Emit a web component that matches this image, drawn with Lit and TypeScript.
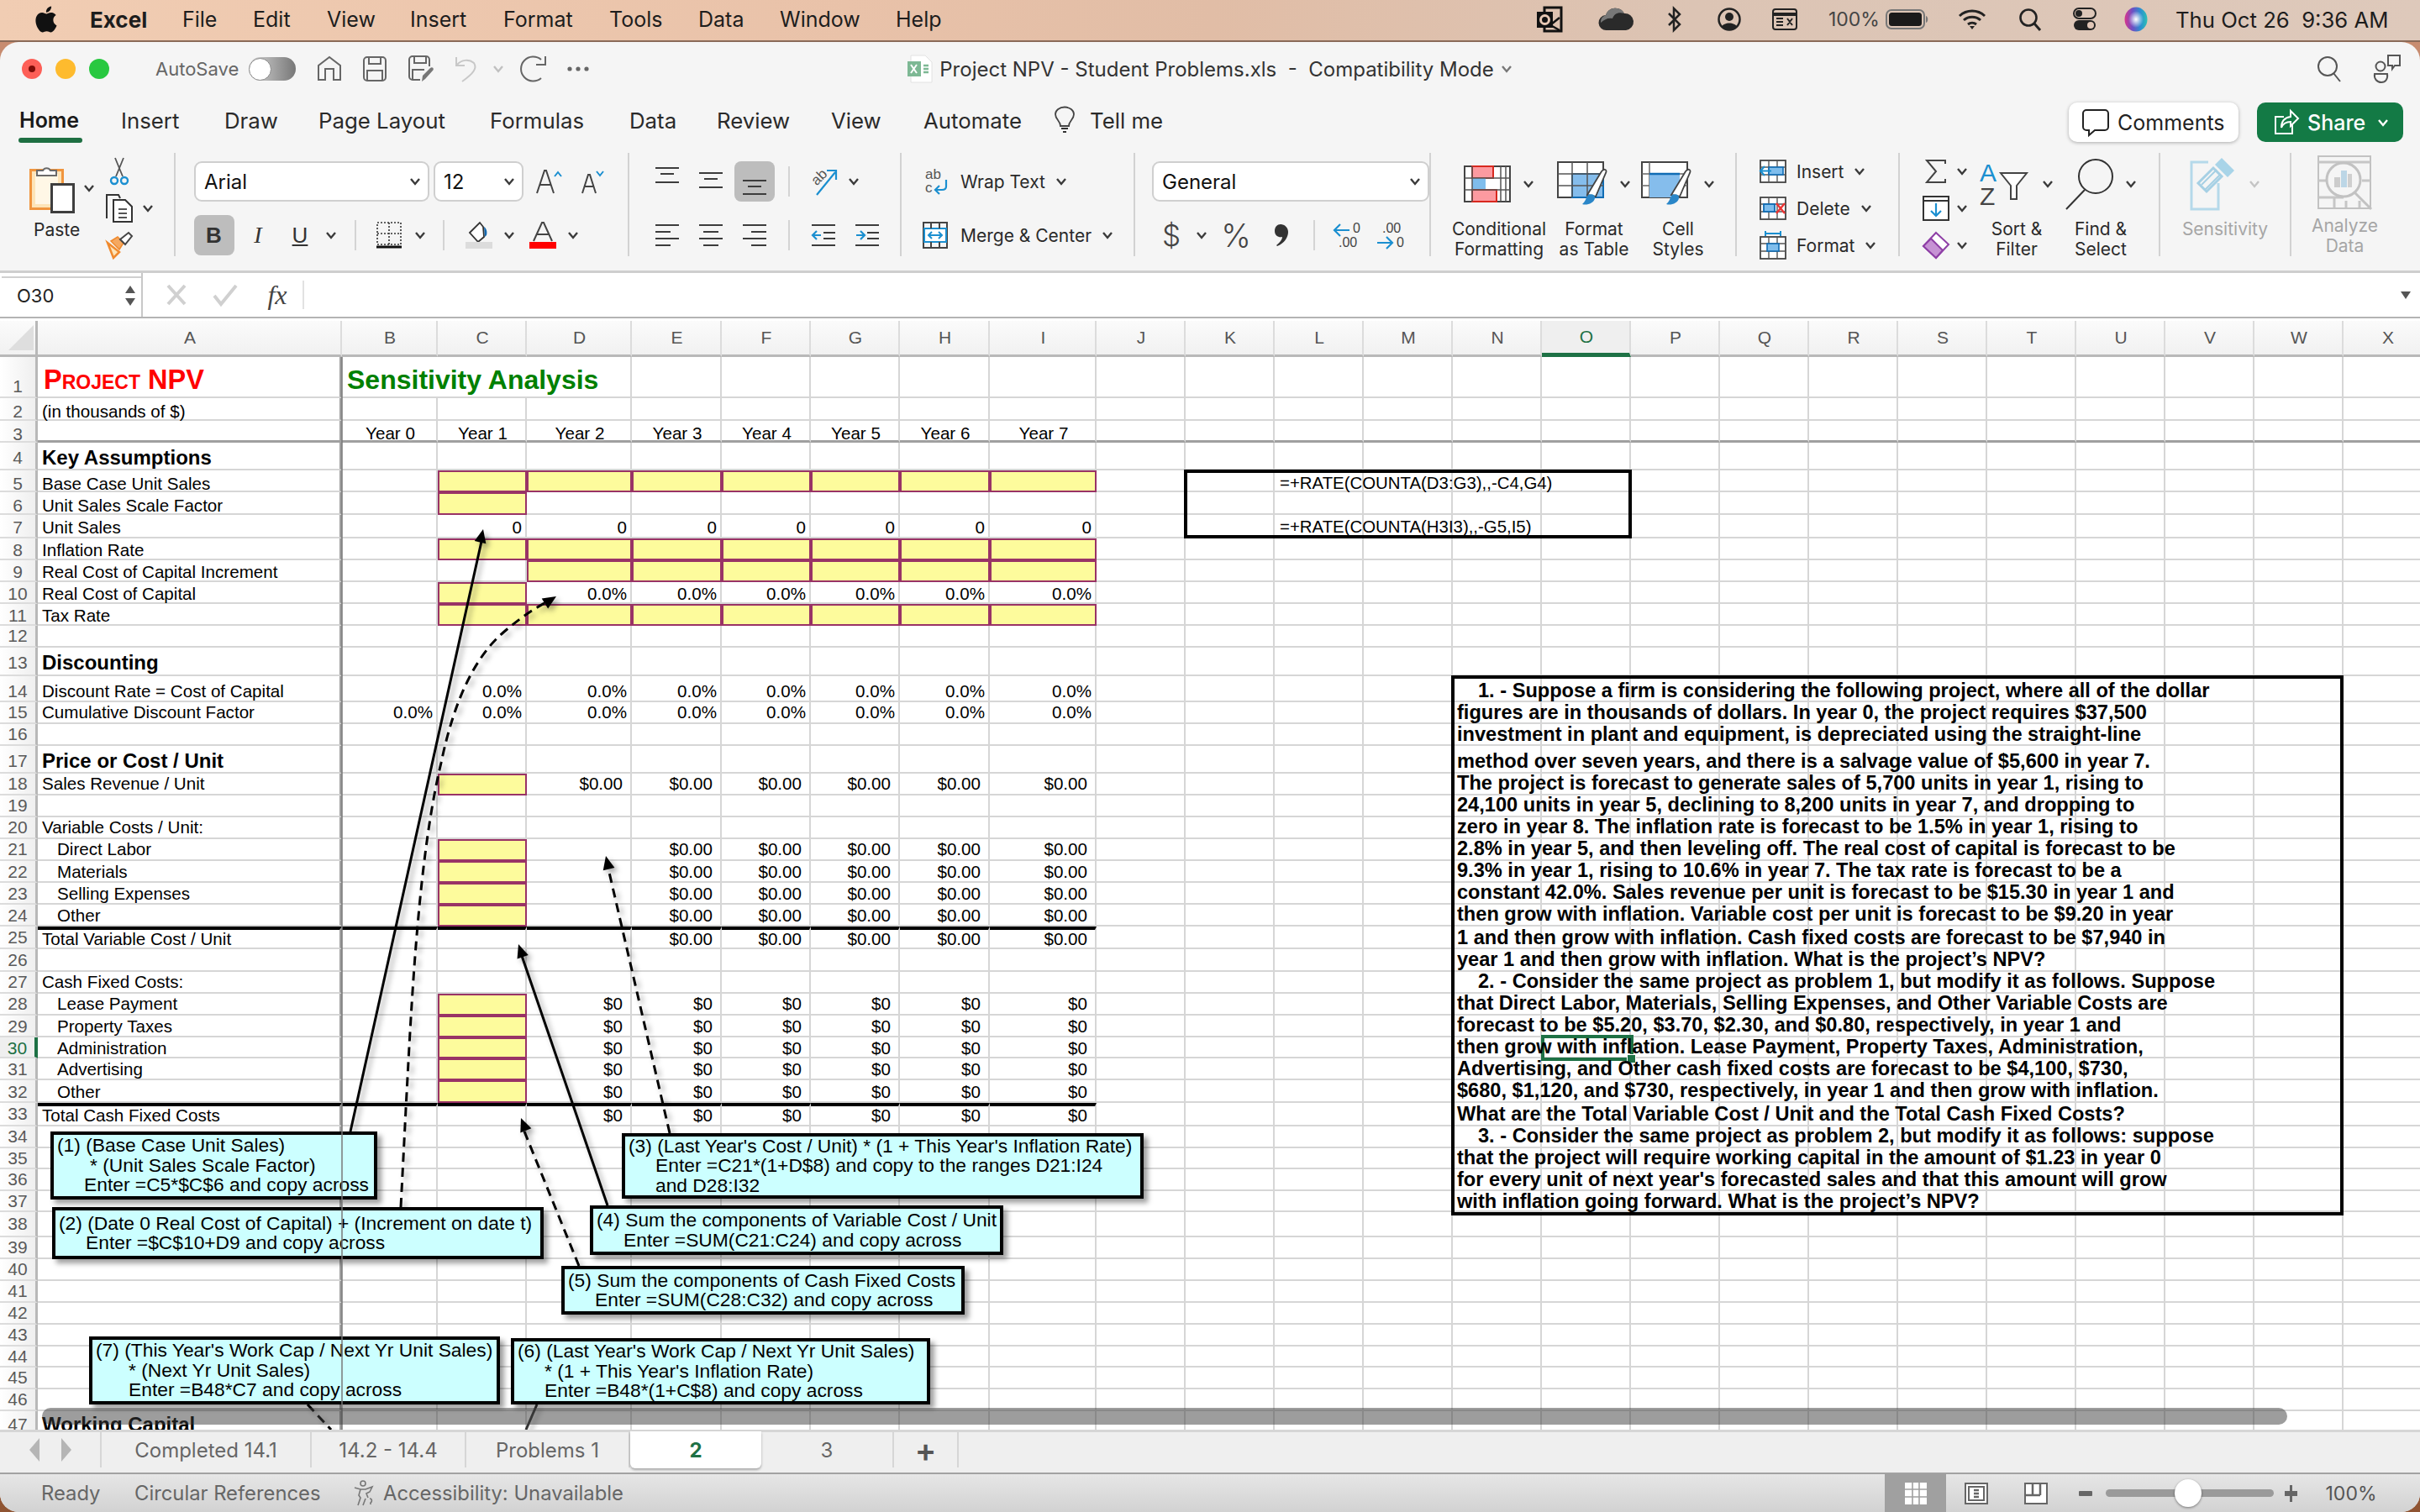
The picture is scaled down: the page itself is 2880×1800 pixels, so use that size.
import { LitElement, html, css } from "lit";
import { customElement } from "lit/decorators.js";

const BLUE = "#1b8fd0";
const chev = (c = "#3a3a3a") => html`<svg class="chev" width="14" height="10" viewBox="0 0 14 10"><path d="M2 2l5 6 5-6" fill="none" stroke=${c} stroke-width="2.4"/></svg>`;

const I = {
  apple: html`<svg width="30" height="34" viewBox="3 1 18 22"><path fill="#111" d="M18.71 19.5c-.83 1.24-1.71 2.45-3.05 2.47-1.34.03-1.77-.79-3.29-.79-1.53 0-2 .77-3.27.82-1.31.05-2.3-1.32-3.14-2.53C4.25 17 2.94 12.45 4.7 9.39c.87-1.52 2.43-2.48 4.12-2.51 1.28-.02 2.5.87 3.29.87.78 0 2.26-1.07 3.81-.91.65.03 2.47.26 3.64 1.98-.09.06-2.17 1.28-2.15 3.81.03 3.02 2.65 4.03 2.68 4.04-.03.07-.42 1.44-1.38 2.83M13 3.5c.73-.83 1.94-1.46 2.94-1.5.13 1.17-.34 2.35-1.04 3.19-.69.85-1.83 1.51-2.95 1.42-.15-1.15.41-2.35 1.05-3.11z"/></svg>`,
  outlook: html`<svg width="32" height="32" viewBox="0 0 32 32"><path d="M10 2h20v28H10z" fill="none" stroke="#111" stroke-width="3"/><path d="M12 20l16 9M28 14l-10 8" stroke="#111" stroke-width="2.5" fill="none"/><rect x="1" y="7" width="19" height="19" fill="#111"/><circle cx="10.5" cy="16.5" r="5" fill="none" stroke="#e8c8b4" stroke-width="3"/></svg>`,
  cloud: html`<svg width="42" height="28" viewBox="0 0 42 28"><path d="M10 27a9 9 0 0 1-1-18 12 12 0 0 1 22-2 10 10 0 0 1 2 20z" fill="#2a2a2a"/><path d="M3 18a9 9 0 0 1 6-9 12 12 0 0 1 22-2c-8-2-12 1-14 6-6-1-9 1-14 5z" fill="#777"/></svg>`,
  bt: html`<svg width="18" height="32" viewBox="0 0 18 32"><path d="M2 9l13 13-7 7V3l7 7L2 23" fill="none" stroke="#222" stroke-width="2.5"/></svg>`,
  user: html`<svg width="28" height="28" viewBox="0 0 28 28"><circle cx="14" cy="14" r="12.5" fill="none" stroke="#222" stroke-width="2.5"/><circle cx="14" cy="11" r="5" fill="#222"/><path d="M5 23c2-6 16-6 18 0l-4 3H9z" fill="#222"/></svg>`,
  cmd: html`<svg width="30" height="26" viewBox="0 0 30 26"><rect x="1" y="1" width="28" height="24" rx="3" fill="none" stroke="#222" stroke-width="2"/><path d="M1 7h28" stroke="#222" stroke-width="4"/><path d="M5 12h8M5 16h8M5 20h8M18 12l6 8M24 12l-6 8" stroke="#222" stroke-width="2"/></svg>`,
  battery: html`<svg width="52" height="24" viewBox="0 0 52 24"><rect x="1" y="1" width="45" height="22" rx="6" fill="none" stroke="#777" stroke-width="2"/><rect x="4" y="4" width="39" height="16" rx="3.5" fill="#1a1a1a"/><path d="M48 8c3 1 3 7 0 8z" fill="#777"/></svg>`,
  wifi: html`<svg width="34" height="26" viewBox="0 0 34 26"><path d="M2 9a22 22 0 0 1 30 0M7 14a15 15 0 0 1 20 0M12 19a8 8 0 0 1 10 0" fill="none" stroke="#222" stroke-width="3"/><path d="M14 21h6l-3 4z" fill="#222"/></svg>`,
  msearch: html`<svg width="28" height="28" viewBox="0 0 28 28"><circle cx="12" cy="12" r="9.5" fill="none" stroke="#222" stroke-width="2.6"/><path d="M19 19l7 8" stroke="#222" stroke-width="3"/></svg>`,
  ctrl: html`<svg width="30" height="28" viewBox="0 0 30 28"><rect x="2" y="1" width="26" height="12" rx="6" fill="none" stroke="#222" stroke-width="2"/><circle cx="8" cy="7" r="4" fill="#222"/><rect x="2" y="15" width="26" height="12" rx="6" fill="#222"/><circle cx="22" cy="21" r="4" fill="#e0c6b6"/></svg>`,
  siri: html`<svg width="28" height="30" viewBox="0 0 28 30"><defs><linearGradient id="sg" x1="0" x2="1"><stop offset="0" stop-color="#d8348c"/><stop offset=".35" stop-color="#6d4fc4"/><stop offset=".7" stop-color="#2a8fd0"/><stop offset="1" stop-color="#2cc0b4"/></linearGradient><radialGradient id="sc"><stop offset="0" stop-color="#fff"/><stop offset="1" stop-color="#fff" stop-opacity="0"/></radialGradient></defs><ellipse cx="14" cy="15" rx="13.5" ry="14.5" fill="url(#sg)"/><ellipse cx="14" cy="15" rx="9" ry="10" fill="url(#sc)"/></svg>`,
  home: html`<svg width="28" height="30" viewBox="0 0 28 30"><path d="M1 28V11L14 1l13 10v17h-8V15H9v13z" fill="none" stroke="#666" stroke-width="2"/></svg>`,
  save: html`<svg width="28" height="30" viewBox="0 0 28 30"><rect x="1" y="1" width="26" height="28" rx="4" fill="none" stroke="#666" stroke-width="2"/><path d="M7 1v8h14V1M5 29V17h18v12" fill="none" stroke="#666" stroke-width="2"/></svg>`,
  saveas: html`<svg width="30" height="32" viewBox="0 0 30 32"><path d="M14 29H5a4 4 0 0 1-4-4V5a4 4 0 0 1 4-4h16a4 4 0 0 1 4 4v8" fill="none" stroke="#666" stroke-width="2"/><path d="M7 1v8h14V1M5 28V17h14" fill="none" stroke="#666" stroke-width="2"/><path d="M16 31l1-7 9-9c3-2 5 1 3 3l-9 10z" fill="#777"/></svg>`,
  undo: html`<svg width="27" height="32" viewBox="0 0 27 32"><path d="M2 2v10h10M3 11c5-6 14-7 20-2 4 6 0 12-14 22" fill="none" stroke="#c8c8c8" stroke-width="2"/></svg>`,
  redo: html`<svg width="32" height="32" viewBox="0 0 32 32"><path d="M31 1v10H20M26 5A14.5 14.5 0 1 0 26 27" fill="none" stroke="#666" stroke-width="2"/></svg>`,
  dots: html`<svg width="26" height="6" viewBox="0 0 26 6"><circle cx="3" cy="3" r="2.6" fill="#666"/><circle cx="13" cy="3" r="2.6" fill="#666"/><circle cx="23" cy="3" r="2.6" fill="#666"/></svg>`,
  xls: html`<svg width="30" height="32" viewBox="0 0 30 32"><path d="M4 0h17l8 8v24H4z" fill="#fff" stroke="#e2e2e2"/><rect x="0" y="7" width="16" height="18" fill="#7db894"/><path d="M4 11l7 10M11 11l-7 10" stroke="#fff" stroke-width="2"/><path d="M19 12h6M19 16h6M19 20h6" stroke="#7db894" stroke-width="2.4"/></svg>`,
  search: html`<svg width="28" height="30" viewBox="0 0 28 30"><circle cx="12" cy="12" r="11" fill="none" stroke="#555" stroke-width="2"/><path d="M19 20l8 10" stroke="#555" stroke-width="2"/></svg>`,
  people: html`<svg width="34" height="34" viewBox="0 0 34 34"><circle cx="9" cy="14" r="5.5" fill="none" stroke="#555" stroke-width="2"/><path d="M2 23h15c1 6-2 10-7 10S1 29 2 23z" fill="none" stroke="#555" stroke-width="2"/><path d="M18 1h14v12h-6l-3 4v-4h-5z" fill="none" stroke="#555" stroke-width="2"/></svg>`,
  bulb: html`<svg width="24" height="32" viewBox="0 0 24 32"><path d="M7 23c0-6-6-8-6-14a11 8.500 0 0 1 22 0c0 6-6 8-6 14z" fill="none" stroke="#444" stroke-width="1.800"/><path d="M8 26h8M10 30h4" stroke="#333" stroke-width="2.200"/></svg>`,
  comment: html`<svg width="32" height="32" viewBox="0 0 32 32"><path d="M5 1h22a4 4 0 0 1 4 4v16a4 4 0 0 1-4 4H15l-7 6v-6H5a4 4 0 0 1-4-4V5a4 4 0 0 1 4-4z" fill="none" stroke="#222" stroke-width="2"/></svg>`,
  share: html`<svg width="30" height="30" viewBox="0 0 30 30"><path d="M22 17v11H2V8h10" fill="none" stroke="#fff" stroke-width="2"/><path d="M20 1l9 9-9 9v-5c-6 0-9 2-11 7 0-8 4-12 11-13z" fill="none" stroke="#fff" stroke-width="2"/></svg>`,
  paste: html`<svg width="56" height="62" viewBox="0 0 56 62"><rect x="1.500" y="9.500" width="38" height="46" fill="#fde4b8" stroke="#f0953e" stroke-width="3"/><rect x="7" y="14" width="27" height="36" fill="#fff7e6"/><path d="M9 16v-6h7a5 5 0 0 1 9 0h7v6z" fill="#fff" stroke="#6a6a6a" stroke-width="2"/><rect x="26.500" y="26.500" width="26" height="33" fill="#fff" stroke="#3e3e3e" stroke-width="3"/></svg>`,
  scissors: html`<svg width="22" height="34" viewBox="0 0 22 34"><path d="M6 1l9 22M16 1L7 23" stroke="#555" stroke-width="1.800" fill="none"/><circle cx="5" cy="28" r="4" fill="none" stroke="${BLUE}" stroke-width="2.400"/><circle cx="17" cy="28" r="4" fill="none" stroke="${BLUE}" stroke-width="2.400"/></svg>`,
  copy: html`<svg width="32" height="34" viewBox="0 0 32 34"><path d="M1 29V1h14l2 4" fill="none" stroke="#333" stroke-width="2"/><path d="M9 7h14l8 8v18H9z" fill="#fff" stroke="#333" stroke-width="2"/><path d="M15 18h10M15 23h10M15 28h10" stroke="#555" stroke-width="1.800"/></svg>`,
  painter: html`<svg width="32" height="32" viewBox="0 0 32 32"><path d="M2 13l14 11-7 7z" fill="#fde4b8" stroke="#f08a2e" stroke-width="2.500"/><path d="M6 11l8-5 7 7-5 8z" fill="#f5a860" stroke="#f08a2e" stroke-width="1.500"/><path d="M17 9l10-8 4 4-8 10z" fill="#fff" stroke="#444" stroke-width="2"/></svg>`,
  aUp: html`<svg width="32" height="30" viewBox="0 0 32 30"><path d="M2 29L11 2h2l9 27M6 19h12" fill="none" stroke="#444" stroke-width="2"/><path d="M23 9l4-5 4 5" fill="none" stroke="${BLUE}" stroke-width="2"/></svg>`,
  aDn: html`<svg width="30" height="30" viewBox="0 0 30 30"><path d="M2 29L9 7h2l7 22M5 21h11" fill="none" stroke="#444" stroke-width="2"/><path d="M19 3l4 5 4-5" fill="none" stroke="${BLUE}" stroke-width="2"/></svg>`,
  alTop: html`<svg width="28" height="48" viewBox="0 0 28 48"><path d="M0 8h28M6 15h16M0 25h28" stroke="#3c3c3c" stroke-width="2.200"/></svg>`,
  alMid: html`<svg width="28" height="48" viewBox="0 0 28 48"><path d="M0 14h28M6 21h16M0 31h28" stroke="#3c3c3c" stroke-width="2.200"/></svg>`,
  alBot: html`<svg width="28" height="48" viewBox="0 0 28 48"><path d="M0 23h28M6 30h16M0 39h28" stroke="#3c3c3c" stroke-width="2.200"/></svg>`,
  alL: html`<svg width="28" height="28" viewBox="0 0 28 28"><path d="M0 2h28M0 10h18M0 18h28M0 26h18" stroke="#3c3c3c" stroke-width="2.200"/></svg>`,
  alC: html`<svg width="28" height="28" viewBox="0 0 28 28"><path d="M0 2h28M5 10h18M0 18h28M5 26h18" stroke="#3c3c3c" stroke-width="2.200"/></svg>`,
  alR: html`<svg width="28" height="28" viewBox="0 0 28 28"><path d="M0 2h28M10 10h18M0 18h28M10 26h18" stroke="#3c3c3c" stroke-width="2.200"/></svg>`,
  orient: html`<svg width="36" height="34" viewBox="0 0 36 34"><text x="4" y="20" transform="rotate(-45 10 14)" class="svt" font-size="17" fill="#555">ab</text><path d="M10 33L32 6M22 4h11v11" fill="none" stroke="${BLUE}" stroke-width="2.200"/></svg>`,
  outdent: html`<svg width="28" height="28" viewBox="0 0 28 28"><path d="M0 2h28M14 11h14M14 18h14M0 26h28" stroke="#3c3c3c" stroke-width="2.200"/><path d="M11 14H1M6 9l-5 5 5 5" fill="none" stroke="${BLUE}" stroke-width="2.200"/></svg>`,
  indent: html`<svg width="28" height="28" viewBox="0 0 28 28"><path d="M0 2h28M14 11h14M14 18h14M0 26h28" stroke="#3c3c3c" stroke-width="2.200"/><path d="M1 14h10M6 9l5 5-5 5" fill="none" stroke="${BLUE}" stroke-width="2.200"/></svg>`,
  wrap: html`<svg width="30" height="34" viewBox="0 0 30 34"><text x="0" y="14" class="svt" font-size="17" fill="#555">ab</text><text x="0" y="30" class="svt" font-size="17" fill="#555">c</text><path d="M25 15v8c0 3-2 4-5 4h-8M17 22l-5 5 5 5" fill="none" stroke="${BLUE}" stroke-width="2.200"/></svg>`,
  merge: html`<svg class="mg" width="30" height="32" viewBox="0 0 30 32"><rect x="1" y="1" width="28" height="30" fill="none" stroke="#444" stroke-width="2"/><rect x="2" y="8" width="26" height="16" fill="#fff" stroke="${BLUE}" stroke-width="2"/><path d="M10 1v7M20 1v7M10 24v7M20 24v7" stroke="#444" stroke-width="2"/><path d="M7 16h16M11 12l-4 4 4 4M19 12l4 4-4 4" fill="none" stroke="${BLUE}" stroke-width="2"/></svg>`,
  commaIc: html`<svg width="18" height="28" viewBox="0 0 18 28"><path d="M8 1c5 0 9 4 9 9 0 7-5 14-13 17l-1-1c4-3 7-7 7-10-4 1-9-1-9-7 0-5 3-8 7-8z" fill="#333"/></svg>`,
  pfirst: html`<svg width="34" height="34" viewBox="0 0 34 34"><path d="M1 11h18M8 4l-7 7 7 7" fill="none" stroke="${BLUE}" stroke-width="2.200"/><text x="23" y="14" class="svt" font-size="16" fill="#444">0</text><text x="6" y="31" class="svt" font-size="16" fill="#444">.00</text></svg>`,
  psecond: html`<svg width="34" height="34" viewBox="0 0 34 34"><text x="6" y="14" class="svt" font-size="16" fill="#444">.00</text><path d="M0 26h18M11 19l7 7-7 7" fill="none" stroke="${BLUE}" stroke-width="2.200"/><text x="23" y="31" class="svt" font-size="16" fill="#444">0</text></svg>`,
  borders: html`<svg width="30" height="32" viewBox="0 0 30 32"><path d="M1 1h28v26H1zM15 1v26M1 14h28" fill="none" stroke="#333" stroke-width="1.600" stroke-dasharray="2 2"/><path d="M0 30h30" stroke="#111" stroke-width="3"/></svg>`,
  fill: html`<svg width="34" height="32" viewBox="0 0 34 32"><path d="M5 13L17 1l4 5 1 12-7 6z" fill="#fff" stroke="#333" stroke-width="1.800"/><path d="M22 6c3 2 4 6 3 10l-2 2z" fill="#156ab0"/><rect x="0" y="24" width="32" height="8" fill="#dcdcdc"/></svg>`,
  fontA: html`<svg width="34" height="32" viewBox="0 0 34 32"><path d="M6 23L16 1h2l10 22M10 15h14" fill="none" stroke="#444" stroke-width="2"/><rect x="1" y="24" width="32" height="8" fill="#f00"/></svg>`,
  cond: html`<svg width="56" height="44" viewBox="0 0 56 44"><rect x="1" y="1" width="54" height="42" fill="#fff" stroke="#444" stroke-width="2"/><rect x="10" y="1" width="25" height="14" fill="#fc9aa0" stroke="#d8281e" stroke-width="2"/><rect x="10" y="15" width="16" height="14" fill="#7fbdec"/><rect x="10" y="29" width="29" height="14" fill="#fc9aa0" stroke="#d8281e" stroke-width="2"/><path d="M10 1v42M44 1v42M50 1v42M1 15h54M1 29h54" fill="none" stroke="#555" stroke-width="1.500"/></svg>`,
  table: html`<svg width="60" height="54" viewBox="0 0 60 54"><rect x="1" y="1" width="54" height="42" fill="#fff" stroke="#444" stroke-width="2"/><rect x="18" y="15" width="37" height="28" fill="#85bdec" stroke="#106cb4" stroke-width="2"/><path d="M18 1v42M36 1v42M1 15h54M1 29h54" stroke="#555" stroke-width="1.500"/><path d="M36 40L53 12c3-4 7-2 5 2L46 42z" fill="#fff" stroke="#444" stroke-width="1.800"/><path d="M37 40c4-2 9 0 8 4-1 6-10 9-15 7 4-3 4-7 7-11z" fill="#2a86c8"/></svg>`,
  cstyle: html`<svg width="60" height="54" viewBox="0 0 60 54"><rect x="1" y="1" width="54" height="42" fill="#fff" stroke="#444" stroke-width="2"/><path d="M1 15h54M1 29h54M10 1v42" stroke="#666" stroke-width="1.500"/><rect x="10" y="15" width="36" height="28" fill="#85bdec"/><path d="M10 15h36" stroke="#106cb4" stroke-width="2.500"/><path d="M36 40L53 12c3-4 7-2 5 2L46 42z" fill="#fff" stroke="#444" stroke-width="1.800"/><path d="M37 40c4-2 9 0 8 4-1 6-10 9-15 7 4-3 4-7 7-11z" fill="#2a86c8"/></svg>`,
  ins: html`<svg width="32" height="28" viewBox="0 0 32 28"><rect x="1" y="1" width="30" height="26" fill="#fff" stroke="#444" stroke-width="1.800"/><path d="M11 1v26M21 1v26M1 9h30M1 18h30" stroke="#555" stroke-width="1.400"/><rect x="11" y="9" width="17" height="9" fill="#7fbdec" stroke="#106cb4" stroke-width="1.600"/><path d="M1 13.500h13M6 8l-5 5.500L6 19" fill="none" stroke="${BLUE}" stroke-width="2.200"/></svg>`,
  del: html`<svg width="32" height="28" viewBox="0 0 32 28"><rect x="1" y="1" width="30" height="26" fill="#fff" stroke="#444" stroke-width="1.800"/><path d="M11 1v26M21 1v26M1 9h30M1 18h30" stroke="#555" stroke-width="1.400"/><rect x="5" y="9" width="13" height="9" fill="#7fbdec" stroke="#106cb4" stroke-width="1.800"/><path d="M20 8l10 12M30 8L20 20" stroke="#e33" stroke-width="2.400"/></svg>`,
  fmt: html`<svg width="32" height="34" viewBox="0 0 32 34"><rect x="1" y="7" width="30" height="26" fill="#fff" stroke="#444" stroke-width="1.800"/><path d="M11 7v26M21 7v26M1 15h30M1 24h30" stroke="#555" stroke-width="1.400"/><rect x="9" y="15" width="14" height="9" fill="#7fbdec" stroke="#106cb4" stroke-width="1.600"/><path d="M7 3h18M7 0v6M25 0v6" stroke="${BLUE}" stroke-width="2"/></svg>`,
  sum: html`<svg width="26" height="30" viewBox="0 0 26 30"><path d="M24 6V2H2l11 13L2 28h22v-4" fill="none" stroke="#444" stroke-width="2"/></svg>`,
  fillDn: html`<svg width="32" height="30" viewBox="0 0 32 30"><rect x="1" y="1" width="30" height="28" fill="#fff" stroke="#333" stroke-width="2"/><path d="M1 6h30" stroke="#333" stroke-width="2"/><path d="M16 9v15M10 18l6 6 6-6" fill="none" stroke="${BLUE}" stroke-width="2.200"/></svg>`,
  eraser: html`<svg width="32" height="32" viewBox="0 0 32 32"><path d="M16 1l15 14-15 16L1 17z" fill="#fff" stroke="#8e3fa6" stroke-width="2"/><path d="M1 17l9-9 14 14-8 9z" fill="#c692d4" stroke="#8e3fa6" stroke-width="2"/></svg>`,
  sort: html`<svg width="60" height="52" viewBox="0 0 60 52"><text x="0" y="23" class="svt" font-size="30" fill="${BLUE}">A</text><text x="0" y="51" class="svt" font-size="30" fill="#444">Z</text><path d="M25 13h31l-12 15v16h-7V28z" fill="#fff" stroke="#444" stroke-width="2"/></svg>`,
  find: html`<svg width="58" height="60" viewBox="0 0 58 60"><circle cx="37" cy="21" r="20" fill="none" stroke="#333" stroke-width="2"/><path d="M24 37L2 60" stroke="#333" stroke-width="2"/></svg>`,
  sens: html`<svg width="56" height="62" viewBox="0 0 56 62"><path d="M22 5H2v56h32V30" fill="none" stroke="#b5d9ea" stroke-width="3"/><path d="M10 30l18-18 10 10-18 18z" fill="none" stroke="#a6d0e4" stroke-width="3"/><path d="M14 32l18-18M18 38l18-18" stroke="#a6d0e4" stroke-width="2"/><path d="M30 8l8-8 15 15-8 8z" fill="#a8d4e8"/></svg>`,
  analyze: html`<svg width="66" height="64" viewBox="0 0 66 64"><rect x="1" y="1" width="62" height="62" fill="none" stroke="#c2c2c2" stroke-width="2"/><path d="M1 8h62M1 30h10M53 30h10M1 50h30M20 50v12M34 54v8M50 54v8" stroke="#c6c6c6" stroke-width="3"/><circle cx="31" cy="29" r="20" fill="#f5f5f5" stroke="#c2c2c2" stroke-width="3"/><rect x="20" y="26" width="7" height="12" fill="#ccc"/><rect x="28" y="18" width="7" height="20" fill="#bcd6e6"/><rect x="36" y="22" width="5" height="16" fill="#cfcfcf"/><path d="M44 44l20 20" stroke="#c2c2c2" stroke-width="3"/></svg>`,
  a11y: html`<svg width="26" height="32" viewBox="0 0 26 32"><circle cx="12" cy="4" r="3" fill="none" stroke="#777" stroke-width="1.600"/><path d="M2 9l7 2h6l8-3-3 6-4 2 2 5M9 11l-2 7 2 3-3 9M15 22l-3 8M20 22c3 0 3 4 1 5v2" fill="none" stroke="#777" stroke-width="1.600"/></svg>`,
  vNormal: html`<svg width="26" height="26" viewBox="0 0 26 26"><rect width="26" height="26" fill="#fff"/><path d="M0 8h26M0 17h26M9 0v26M17 0v26" stroke="#a0a0a0" stroke-width="1.600"/></svg>`,
  vPage: html`<svg width="28" height="26" viewBox="0 0 28 26"><rect x="1" y="1" width="26" height="24" fill="#fff" stroke="#666" stroke-width="2"/><rect x="5" y="5" width="18" height="16" fill="none" stroke="#666" stroke-width="2"/><path d="M11 9h6M11 13h6M11 17h6" stroke="#666" stroke-width="2.500"/></svg>`,
  vBreak: html`<svg width="28" height="26" viewBox="0 0 28 26"><rect x="1" y="1" width="26" height="24" fill="#fff" stroke="#666" stroke-width="2"/><path d="M10 1v14M19 1v14M1 15h18" stroke="#666" stroke-width="2.500"/></svg>`,
};

const COLS = ["A","B","C","D","E","F","G","H","I","J","K","L","M","N","O","P","Q","R","S","T","U","V","W","X"];
const col = (l: string) => COLS.indexOf(l);
const span = (a: string, b: string) => COLS.slice(col(a), col(b) + 1);

type Cell = { t?: string; k?: string };
const build = () => {
  const m: Record<string, Cell> = {};
  const set = (r: number, c: string, t: string, k = "") => { m[r + c] = { t, k }; };
  const fillv = (rows: number[], cs: string[], t: string, k: string) => rows.forEach((r) => cs.forEach((c) => set(r, c, t, k)));
  const labels: [number, string, string?][] = [
    [2, "(in thousands of $)"], [4, "Key Assumptions", "hd"], [5, "Base Case Unit Sales"], [6, "Unit Sales Scale Factor"],
    [7, "Unit Sales"], [8, "Inflation Rate"], [9, "Real Cost of Capital Increment"], [10, "Real Cost of Capital"], [11, "Tax Rate"],
    [13, "Discounting", "hd"], [14, "Discount Rate = Cost of Capital"], [15, "Cumulative Discount Factor"],
    [17, "Price or Cost / Unit", "hd"], [18, "Sales Revenue / Unit"], [20, "Variable Costs / Unit:"],
    [21, "Direct Labor", "ind"], [22, "Materials", "ind"], [23, "Selling Expenses", "ind"], [24, "Other", "ind"],
    [25, "Total Variable Cost / Unit"], [27, "Cash Fixed Costs:"], [28, "Lease Payment", "ind"], [29, "Property Taxes", "ind"],
    [30, "Administration", "ind"], [31, "Advertising", "ind"], [32, "Other", "ind"], [33, "Total Cash Fixed Costs"], [47, "Working Capital", "hd"],
  ];
  labels.forEach(([r, t, k]) => set(r, "A", t, "lab " + (k || "")));
  set(1, "A", "Project NPV", "lab npv");
  set(1, "B", "Sensitivity Analysis", "lab sens");
  span("B", "I").forEach((c, i) => set(3, c, "Year " + i, "ctr"));
  fillv([7], span("C", "I"), "0", "num");
  fillv([10], span("D", "I"), "0.0%", "num");
  fillv([14], span("C", "I"), "0.0%", "num");
  fillv([15], span("B", "I"), "0.0%", "num");
  fillv([18], span("D", "I"), "$0.00", "acc");
  fillv([21, 22, 23, 24, 25], span("E", "I"), "$0.00", "acc");
  fillv([28, 29, 30, 31, 32, 33], span("D", "I"), "$0", "acc");
  return m;
};
const CELLS = build();
const YEL = new Set<string>();
[5, 8, 11].forEach((r) => span("C", "I").forEach((c) => YEL.add(r + c)));
span("D", "I").forEach((c) => YEL.add("9" + c));
[6, 10, 18, 21, 22, 23, 24, 28, 29, 30, 31, 32].forEach((r) => YEL.add(r + "C"));

const LOW7 = new Set([1, 2, 3, 5, 6, 14]);
const LOW4 = new Set([4, 7, 8, 9, 10, 11, 13, 17]);
const LOW2 = new Set([22, 23, 24, 29, 30, 31, 32]);
const rowShift = (r: number) => (LOW7.has(r) ? "low7" : LOW4.has(r) ? "low4" : LOW2.has(r) ? "low2" : "");

const OY = 379;
const SHAPES: { x: number; y: number; w: number; h: number; lines: [string, number][] }[] = [
  { x: 60, y: 1347, w: 389, h: 81, lines: [["(1) (Base Case Unit Sales)", 0], ["* (Unit Sales Scale Factor)", 39], ["Enter =C5*$C$6 and copy across", 32]] },
  { x: 62, y: 1437, w: 585, h: 62, lines: [["(2) (Date 0 Real Cost of Capital) + (Increment on date t)", 0], ["Enter =$C$10+D9 and copy across", 32]] },
  { x: 740, y: 1349, w: 621, h: 78, lines: [["(3) (Last Year's Cost / Unit) * (1 + This Year's Inflation Rate)", 0], ["Enter =C21*(1+D$8) and copy to the ranges D21:I24", 32], ["and D28:I32", 32]] },
  { x: 702, y: 1435, w: 492, h: 59, lines: [["(4) Sum the components of Variable Cost / Unit", 0], ["Enter =SUM(C21:C24) and copy across", 32]] },
  { x: 668, y: 1507, w: 480, h: 58, lines: [["(5) Sum the components of Cash Fixed Costs", 0], ["Enter =SUM(C28:C32) and copy across", 32]] },
  { x: 608, y: 1593, w: 499, h: 79, lines: [["(6) (Last Year's Work Cap / Next Yr Unit Sales)", 0], ["* (1 + This Year's Inflation Rate)", 32], ["Enter =B48*(1+C$8) and copy across", 32]] },
  { x: 106, y: 1591, w: 489, h: 81, lines: [["(7) (This Year's Work Cap / Next Yr Unit Sales)", 0], ["* (Next Yr Unit Sales)", 39], ["Enter =B48*C7 and copy across", 39]] },
];
const PROBLEM: [string, string?][] = [
  ["1. - Suppose a firm is considering the following project, where all of the dollar", "pin"],
  ["figures are in thousands of dollars. In year 0, the project requires $37,500"],
  ["investment in plant and equipment, is depreciated using the straight-line"],
  ["method over seven years, and there is a salvage value of $5,600 in year 7.", "gap6"],
  ["The project is forecast to generate sales of 5,700 units in year 1, rising to"],
  ["24,100 units in year 5, declining to 8,200 units in year 7, and dropping to"],
  ["zero in year 8. The inflation rate is forecast to be 1.5% in year 1, rising to"],
  ["2.8% in year 5, and then leveling off. The real cost of capital is forecast to be"],
  ["9.3% in year 1, rising to 10.6% in year 7. The tax rate is forecast to be a"],
  ["constant 42.0%. Sales revenue per unit is forecast to be $15.30 in year 1 and"],
  ["then grow with inflation. Variable cost per unit is forecast to be $9.20 in year"],
  ["1 and then grow with inflation. Cash fixed costs are forecast to be $7,940 in", "gap2"],
  ["year 1 and then grow with inflation. What is the project\u2019s NPV?"],
  ["2. - Consider the same project as problem 1, but modify it as follows. Suppose", "pin"],
  ["that Direct Labor, Materials, Selling Expenses, and Other Variable Costs are"],
  ["forecast to be $5.20, $3.70, $2.30, and $0.80, respectively, in year 1 and"],
  ["then grow with inflation. Lease Payment, Property Taxes, Administration,"],
  ["Advertising, and Other cash fixed costs are forecast to be $4,100, $730,"],
  ["$680, $1,120, and $730, respectively, in year 1 and then grow with inflation."],
  ["What are the Total Variable Cost / Unit and the Total Cash Fixed Costs?", "gap2"],
  ["3. - Consider the same project as problem 2, but modify it as follows: suppose", "pin"],
  ["that the project will require working capital in the amount of $1.23 in year 0"],
  ["for every unit of next year's forecasted sales and that this amount will grow"],
  ["with inflation going forward. What is the project\u2019s NPV?"],
];

@customElement("app-root")
export class AppRoot extends LitElement {
  static styles = css`
    :host { display: block; width: 2880px; height: 1800px; overflow: hidden; position: relative;
      background: linear-gradient(180deg, #c98e72 0%, #a5653f 60%, #8f5432 100%);
      font-family: Inter, "Liberation Sans", sans-serif; color: #222; }
    * { box-sizing: border-box; }
    svg { display: block; flex: none; overflow: visible; }
    .svt { font-family: "Liberation Sans", sans-serif; }
    .menubar { height: 50px; padding: 0 0 2px 40px; display: flex; align-items: center; font-size: 25px; color: #1d1d1d;
      background: linear-gradient(90deg, #f1cdb3 0%, #e9c2a9 35%, #e1bda6 50%, #dcc4b4 70%, #dec9bb 100%); border-bottom: 2px solid #8a6a58; }
    .mleft { display: grid; grid-template-columns: 67px 110px 84px 88px 99px 111px 126px 106px 97px 138px auto; align-items: center; }
    .mleft b { font-weight: 700; font-size: 26px; }
    .mright { margin-left: auto; width: 1052px; display: grid; grid-template-columns: 74px 82px 60px 65px 67px 68px 86px 72px 64px 62px 61px auto; align-items: center; }
    .pct { font-size: 23px; color: #444; }
    .time { font-size: 25.700px; white-space: nowrap; }
    .win { height: 1750px; background: #f5f5f5; border-radius: 22px; overflow: hidden; display: flex; flex-direction: column; }
    .title { height: 64px; flex: none; display: grid; grid-template-columns: 1fr auto 1fr; align-items: center; }
    .tleft { display: grid; grid-template-columns: 26px 159px 111px 82px 54px 54px 55px 45px 32px 57px auto; align-items: center; }
    .lights { display: flex; gap: 16px; }
    .light { width: 24px; height: 24px; border-radius: 50%; display: flex; align-items: center; justify-content: center; }
    .l-r { background: #fd5f57; } .l-y { background: #febb2e; } .l-g { background: #28c840; }
    .l-r::after { content: ""; width: 8px; height: 8px; border-radius: 50%; background: #7d0d08; }
    .autosave { font-size: 22px; color: #666; }
    .toggle { width: 56px; height: 28px; border-radius: 14px; background: linear-gradient(90deg, #d8d8d8, #777); display: flex; align-items: center; }
    .toggle i { width: 27px; height: 27px; border-radius: 50%; background: #fff; border: 1px solid #888; }
    .tcenter { display: flex; align-items: center; gap: 8px; font-size: 24px; color: #333; white-space: pre; }
    .tright { display: flex; justify-content: flex-end; align-items: center; gap: 38px; padding-right: 22px; }
    .tabsrow { height: 56px; flex: none; display: flex; padding-left: 23px; padding-right: 20px; }
    .tabs { display: grid; grid-template-columns: 121px 123px 112px 204px 166px 104px 136px 110px 156px 42px auto; font-size: 25.800px; color: #2a2a2a; }
    .tab { height: 56px; display: flex; align-items: center; padding-top: 2px; white-space: nowrap; position: relative; }
    .tab.on { font-weight: 600; color: #1a1a1a; font-size: 25px; }
    .tab.on::after { content: ""; position: absolute; left: -1px; width: 76px; bottom: 0; height: 6px; border-radius: 3px; background: #1e6f42; }
    .bulb { padding-top: 13px; }
    .tactions { margin-left: auto; display: flex; gap: 22px; padding-top: 8px; }
    .btn { height: 47px; border-radius: 10px; display: flex; align-items: center; font-size: 25px; }
    .b-c { width: 202px; background: #fff; box-shadow: 0 1px 4px rgba(0,0,0,.3); padding-left: 16px; gap: 10px; color: #222; }
    .b-s { width: 174px; background: #137a45; color: #fff; padding-left: 20px; font-weight: 500; }
    .b-s span { margin-left: 10px; margin-right: 14px; }
    .ribbon { height: 155px; flex: none; display: flex; border-bottom: 3px solid #cecece; padding-top: 12px; font-size: 21px; color: #2a2a2a; }
    .g { height: 123px; border-right: 2px solid #d2d2d2; flex: none; position: relative; }
    .g1 { width: 209px; padding: 0 0 0 35px; display: grid; grid-template-columns: 91px 60px; }
    .g2 { width: 540px; padding-left: 22px; }
    .g3 { width: 324px; padding-left: 21px; }
    .g4 { width: 278px; padding-left: 25px; }
    .g5 { width: 352px; padding-left: 20px; }
    .g6 { width: 364px; padding-left: 7px; display: grid; grid-template-columns: 148px 78px 122px; }
    .g7 { width: 194px; padding-left: 27px; }
    .g8 { width: 310px; padding-left: 27px; display: grid; grid-template-columns: 62px 100px 100px; }
    .g9 { width: 156px; display: flex; justify-content: center; padding-left: 0; }
    .g10 { width: 123px; border-right: 0; display: flex; justify-content: center; padding-left: 4px; }
    .pastec { padding-top: 10px; }
    .pastetop { display: flex; align-items: center; gap: 8px; height: 64px; }
    .pastelab { margin: 6px 0 0 5px; line-height: 24px; }
    .stack { display: flex; flex-direction: column; }
    .srow { height: 44px; display: flex; align-items: center; }
    .clip { display: grid; grid-template-columns: 32px 36px; justify-items: center; align-items: center; }
    .two { display: flex; flex-direction: column; gap: 16px; padding-top: 10px; }
    .r { height: 48px; display: grid; align-items: center; justify-items: center; }
    .r-f1 { grid-template-columns: 280px 5px 107px 60px 46px; }
    .r-f2 { grid-template-columns: 47px 58px 42px 32px 26px 54px 20px 36px 50px 20px 60px 12px; }
    .r-a1 { grid-template-columns: 48px 56px 48px 34px 48px 24px; }
    .r-a2 { grid-template-columns: 48px 56px 48px 34px 48px 56px; }
    .r-n2 { grid-template-columns: 46px 26px 56px 52px 26px 54px 50px; }
    .dd { width: 100%; height: 48px; background: #fff; border: 2px solid #cfcfcf; border-radius: 9px; display: flex; align-items: center; justify-content: space-between; padding: 0 8px 0 10px; font-size: 24px; color: #111; }
    .on-bg { width: 48px; height: 48px; background: #bdbdbd; border-radius: 8px; display: flex; align-items: center; justify-content: center; }
    .on-b { font: 700 26px "Liberation Sans", sans-serif; color: #333; }
    .fi { font: italic 28px "Liberation Serif", serif; color: #333; }
    .fu { font: 26px "Liberation Sans", sans-serif; color: #333; text-decoration: underline; }
    .sp { width: 2px; height: 36px; background: #d4d4d4; }
    .dollar { font-size: 35px; color: #444; font-weight: 300; }
    .percent { font-size: 38px; color: #444; font-weight: 300; }
    .inl { height: 48px; display: flex; align-items: center; }
    .inl .i { width: 36px; display: flex; justify-content: center; margin-right: 9px; }
    .inl .c { margin-left: 12px; }
    .mg { margin-left: -6px; }
    .big { display: flex; flex-direction: column; align-items: center; white-space: nowrap; }
    .bi { height: 74px; display: flex; align-items: center; gap: 14px; }
    .bl { margin-top: 5px; line-height: 24px; text-align: center; }
    .dim { color: #a6a6a6; }
    .s-ic { width: 31px; display: flex; justify-content: center; margin-right: 13px; }
    .srow .c { margin-left: 12px; }
    .ed { display: grid; grid-template-columns: 32px 30px; justify-items: center; align-items: center; height: 44px; }
    .fbar { height: 52px; flex: none; background: #fff; display: grid; grid-template-columns: 168px 2px 190px 2px 1fr 40px; align-items: center; position: relative; }
    .namebox { height: 44px; margin-left: 2px; background: #fff; display: flex; align-items: center; justify-content: space-between; padding: 0 7px 0 18px; font: 22px Inter, sans-serif; color: #222; border-top: 2px solid #d0d0d0; }
    .updown { display: flex; flex-direction: column; gap: 6px; }
    .tri-u { width: 0; height: 0; border: 6px solid transparent; border-bottom: 9px solid #555; border-top: 0; }
    .tri-d { width: 0; height: 0; border: 6px solid transparent; border-top: 9px solid #555; border-bottom: 0; }
    .fexp { justify-self: end; margin-right: 11px; }
    .fsep { height: 52px; background: #c8c8c8; }
    .fsep2 { height: 34px; background: #e2e2e2; }
    .fctl { display: grid; grid-template-columns: 80px 36px 74px; justify-items: center; align-items: center; padding-left: 0; }
    .fx { font: italic 32px "Liberation Serif", serif; color: #444; margin-left: 14px; }
    .sheetw { height: 1325px; flex: none; position: relative; overflow: hidden; background: #fff; border-top: 2px solid #b4b4b4; padding-top: 3px; }
    .sheet { display: grid; width: 2895px;
      grid-template-columns: 45px 362px 114px 106px 125px 107px 106px 106px 107px 127px repeat(15, 106px);
      grid-template-rows: 43px 49px 27px 26px 33px 26px 27px 28px 26px 26px 26px 26px 26px 34px 31px 26px 26px 33px 26px 26px 26px 26px 26px 26px 26px 27px 27px 26px 26px 26px 25px 26px 27px 28px 26px 25px 26px 25px 30px 26px 26px 26px 26px 26px 25px 26px 26px 33px;
      font: 20.600px "Liberation Sans", sans-serif; color: #000; }
    .ch { background: linear-gradient(#fbfbfb, #f1f1f1); border-right: 2px solid #dcdcdc; border-bottom: 3px solid #b8b8b8; display: flex; align-items: center; justify-content: center; color: #555; font-size: 21px; padding-left: 2px; }
    .ch.sel { background: #efefef; color: #1e7145; border-bottom: 5px solid #1e7145; }
    .ch.corner { position: relative; border-right: 3px solid #b8b8b8; }
    .ch.corner::after { content: ""; position: absolute; left: 10px; bottom: 5px; width: 0; height: 0; border-left: 30px solid transparent; border-bottom: 30px solid #dedede; }
    .rh { background: linear-gradient(90deg, #fff, #efefef); border-bottom: 2px solid #dcdcdc; border-right: 3px solid #b8b8b8; display: flex; align-items: center; justify-content: center; color: #5a5a5a; font-size: 21px; }
    .rh.r1 { align-items: flex-end; }
    .rh.sel { background: #efefef; color: #1e7145; border-right: 4px solid #1e7145; }
    .c0 { border-right: 2px solid #d6d6d6; border-bottom: 2px solid #d6d6d6; display: flex; align-items: center; white-space: nowrap; min-width: 0; padding-right: 6px; }
    .low7 { padding-top: 7px; }
    .low4 { padding-top: 4px; }
    .low2 { padding-top: 2px; }
    .c0.nor { border-right: 0; }
    .c0.frz { border-right: 3px solid #a0a0a0; }
    .c0.hdrow { border-bottom: 3px solid #a0a0a0; }
    .c0.yel { background: #fdfb9c; border: 2px solid #993366; }
    .c0.thick { border-top: 4px solid #000; }
    .lab { padding-left: 5px; }
    .lab.ind { padding-left: 23px; }
    .hd { font-weight: 700; font-size: 24px; }
    .npv { font: 700 32.500px "Liberation Sans", sans-serif; font-variant: small-caps; color: #f00; padding-left: 7px; }
    .sens { font: 700 32px "Liberation Sans", sans-serif; color: #008000; padding-left: 6px; }
    .ctr { justify-content: center; padding-right: 0; padding-left: 3px; }
    .num { justify-content: flex-end; padding-right: 4px; }
    .acc { justify-content: flex-end; padding-right: 9px; }
    .canvas { position: absolute; inset: 0; pointer-events: none; font: 20.400px "Liberation Sans", sans-serif; color: #000; }
    .arrows { position: absolute; left: 0; top: 0; filter: drop-shadow(4px 4px 3px rgba(0,0,0,.35)); }
    .shape { position: absolute; background: #ccffff; border: 4px solid #000; box-shadow: 5px 5px 6px rgba(0,0,0,.38); display: flex; flex-direction: column; justify-content: center; padding-left: 4px; white-space: pre; line-height: 23.5px; font-size: 22.8px; }
    .rate { position: absolute; border: 4px solid #000; }
    .rate div { position: absolute; white-space: nowrap; }
    .problem { position: absolute; left: 1727px; top: 425px; width: 1062px; height: 643px; border: 4px solid #000; padding: 1px 0 0 3px; font: 700 23.6px "Liberation Sans", sans-serif; line-height: 26px; white-space: nowrap; }
    .pl.pin { padding-left: 25px; }
    .pl.gap6 { margin-top: 6px; }
    .pl.gap2 { margin-top: 2px; }
    .selc { position: absolute; border: 4px solid #1e7145; }
    .selc::after { content: ""; position: absolute; right: -7px; bottom: -7px; width: 9px; height: 9px; background: #1e7145; border: 1px solid #fff; }
    .frzline { position: absolute; left: 406px; top: 46px; bottom: 0; width: 2px; background: rgba(120,120,120,.75); }
    .sbar { position: absolute; left: 50px; top: 1297px; width: 2672px; height: 20px; border-radius: 10px; background: rgba(60,60,60,.5); }
    .sheettabs { height: 53px; flex: none; background: #efefef; border-top: 3px solid #d6d6d6; border-bottom: 2px solid #a2a2a2; display: grid; grid-template-columns: 121px 250px 184px 195px 156px 158px 77px; font-size: 24px; color: #666; }
    .st { display: flex; align-items: center; justify-content: center; border-right: 2px solid #d6d6d6; height: 42px; }
    .st.nav { gap: 26px; padding-left: 0; }
    .st.act { background: #fff; height: 44px; margin-top: -1px; border-right: 0; border-radius: 0 0 6px 6px; box-shadow: 0 2px 3px rgba(0,0,0,.3); color: #1e7145; font-weight: 700; }
    .st.plus { font-size: 38px; font-weight: 600; color: #555; }
    .tl { width: 0; height: 0; border: 14px solid transparent; border-left: 0; border-right: 12px solid #b5b5b5; }
    .tr { width: 0; height: 0; border: 14px solid transparent; border-right: 0; border-left: 12px solid #b5b5b5; }
    .status { flex: 1; background: linear-gradient(#e6e6e6, #d2d2d2); display: flex; align-items: stretch; font-size: 23.800px; color: #666; padding-left: 49px; }
    .status .sleft { display: grid; grid-template-columns: 111px 260px 36px auto; align-items: center; }
    .sright { margin-left: auto; display: grid; grid-template-columns: 73px 72px 70px 48px 200px 42px 100px; align-items: center; justify-items: center; padding-right: 32px; }
    .vbtn { align-self: stretch; background: #a0a0a0; display: flex; align-items: center; justify-content: center; width: 73px; }
    .minus { width: 16px; height: 6px; background: #666; border-radius: 1px; }
    .slider { width: 200px; height: 9px; border-radius: 5px; background: #9a9a9a; position: relative; }
    .slider i { position: absolute; left: 82px; top: -12px; width: 32px; height: 33px; border-radius: 50%; background: #fff; box-shadow: 0 1px 3px rgba(0,0,0,.45); }
    .plus2 { width: 16px; height: 20px; position: relative; }
    .plus2::before { content: ""; position: absolute; left: 6px; top: 0; width: 3px; height: 20px; background: #666; }
    .plus2::after { content: ""; position: absolute; left: 0; top: 7px; width: 15px; height: 6px; background: #666; }
    .zoom { font-size: 23px; color: #555; }
  `;

  private cells() {
    const out: unknown[] = [];
    out.push(html`<div class="ch corner"></div>`);
    COLS.forEach((c) => out.push(html`<div class="ch ${c === "O" ? "sel" : ""}">${c}</div>`));
    for (let r = 1; r <= 47; r++) {
      out.push(html`<div class="rh ${r === 1 ? "r1" : rowShift(r)} ${r === 30 ? "sel" : ""}">${r}</div>`);
      COLS.forEach((c) => {
        const cell = CELLS[r + c];
        const i = col(c);
        const cls = ["c0"];
        if (c === "A") cls.push("frz");
        if (r === 3) cls.push("hdrow");
        if (r === 1 && (c === "B" || c === "C")) cls.push("nor");
        if (YEL.has(r + c)) cls.push("yel");
        if ((r === 25 || r === 33) && i <= col("I")) cls.push("thick");
        const shift = rowShift(r);
        if (shift && cell?.t) cls.push(shift);
        if (cell?.k) cls.push(cell.k);
        out.push(html`<div class=${cls.join(" ")}>${cell?.t ?? ""}</div>`);
      });
    }
    return out;
  }

  private overlay() {
    const tip = (x1: number, y1: number, x2: number, y2: number) => {
      const a = Math.atan2(y2 - y1, x2 - x1), L = 16, W = 7;
      const bx = x2 - L * Math.cos(a), by = y2 - L * Math.sin(a);
      const nx = -Math.sin(a) * W, ny = Math.cos(a) * W;
      return `M${x2} ${y2 - OY}L${bx + nx} ${by + ny - OY}L${bx - nx} ${by - ny - OY}Z`;
    };
    const ln = (a: number, b: number, c: number, d: number) => `M${a} ${b - OY}L${c} ${d - OY}`;
    return html`
      <svg class="arrows" width="2880" height="1330" viewBox="0 0 2880 1330">
        <g fill="none" stroke="#000" stroke-width="3">
          <path d=${ln(417, 1347, 574, 640)}/>
          <path d=${ln(723, 1435, 620, 1135)}/>
          <path d=${ln(639, 1672, 626, 1702)} stroke="#333"/>
          <g stroke-dasharray="11 7">
            <path d=${ln(797, 1349, 723, 1030)}/>
            <path d=${ln(689, 1507, 622, 1342)}/>
            <path d=${ln(366, 1672, 394, 1702)}/>
            <path d="M477 ${1437 - OY}L483 ${1320 - OY}C490 ${1190 - OY} 498 ${1020 - OY} 525 ${908 - OY}C535 ${860 - OY} 555 ${790 - OY} 600 ${752 - OY}C620 ${735 - OY} 635 ${725 - OY} 650 ${717 - OY}"/>
          </g>
        </g>
        <path fill="#000" d=${tip(417, 1347, 575, 630)}/>
        <path fill="#000" d=${tip(723, 1435, 617, 1124)}/>
        <path fill="#000" d=${tip(797, 1349, 721, 1019)}/>
        <path fill="#000" d=${tip(689, 1507, 620, 1331)}/>
        <path fill="#000" d=${tip(630, 730, 662, 710)}/>
      </svg>
      <div class="rate" style="left:1409px;top:${559 - OY}px;width:533px;height:82px">
        <div style="left:110px;top:1px">=+RATE(COUNTA(D3:G3),,-C4,G4)</div>
        <div style="left:110px;top:53px">=+RATE(COUNTA(H3I3),,-G5,I5)</div>
      </div>
      <div class="selc" style="left:1834px;top:${1232 - OY}px;width:110px;height:31px"></div>
      <div class="problem">
        ${PROBLEM.map(([t, k]) => html`<div class="pl ${k || ""}">${t}</div>`)}
      </div>
      ${SHAPES.map((s) => html`
        <div class="shape" style="left:${s.x}px;top:${s.y - OY}px;width:${s.w}px;height:${s.h}px">
          ${s.lines.map(([t, ind]) => html`<div style="padding-left:${ind}px">${t}</div>`)}
        </div>`)}
      <div class="frzline"></div>
      <div class="sbar"></div>
    `;
  }

  render() {
    return html`
      <div class="menubar">
        <div class="mleft">
          ${I.apple}<b>Excel</b><span>File</span><span>Edit</span><span>View</span><span>Insert</span><span>Format</span><span>Tools</span><span>Data</span><span>Window</span><span>Help</span>
        </div>
        <div class="mright">
          ${I.outlook}${I.cloud}${I.bt}${I.user}${I.cmd}<span class="pct">100%</span>${I.battery}${I.wifi}${I.msearch}${I.ctrl}${I.siri}<span class="time">Thu Oct 26&nbsp;&nbsp;9:36 AM</span>
        </div>
      </div>
      <div class="win">
        <div class="title">
          <div class="tleft">
            <span></span>
            <div class="lights"><div class="light l-r"></div><div class="light l-y"></div><div class="light l-g"></div></div>
            <span class="autosave">AutoSave</span>
            <div class="toggle"><i></i></div>
            ${I.home}${I.save}${I.saveas}${I.undo}${chev("#c0c0c0")}${I.redo}${I.dots}
          </div>
          <div class="tcenter">${I.xls}<span>Project NPV - Student Problems.xls  -  Compatibility Mode</span>${chev("#777")}</div>
          <div class="tright">${I.search}${I.people}</div>
        </div>
        <div class="tabsrow">
          <div class="tabs">
            <div class="tab on">Home</div><div class="tab">Insert</div><div class="tab">Draw</div><div class="tab">Page Layout</div><div class="tab">Formulas</div><div class="tab">Data</div><div class="tab">Review</div><div class="tab">View</div><div class="tab">Automate</div><div class="bulb">${I.bulb}</div><div class="tab">Tell me</div>
          </div>
          <div class="tactions">
            <div class="btn b-c">${I.comment}<span>Comments</span></div>
            <div class="btn b-s">${I.share}<span>Share</span>${chev("#fff")}</div>
          </div>
        </div>
        <div class="ribbon">
          <div class="g g1">
            <div class="pastec">
              <div class="pastetop">${I.paste}${chev()}</div>
              <div class="pastelab">Paste</div>
            </div>
            <div class="stack">
              <div class="srow clip">${I.scissors}<span></span></div>
              <div class="srow clip">${I.copy}${chev()}</div>
              <div class="srow clip">${I.painter}<span></span></div>
            </div>
          </div>
          <div class="g g2">
            <div class="two">
              <div class="r r-f1">
                <div class="dd"><span>Arial</span>${chev()}</div><span></span>
                <div class="dd"><span>12</span>${chev()}</div>
                ${I.aUp}${I.aDn}
              </div>
              <div class="r r-f2">
                <div class="on-bg"><span class="on-b">B</span></div>
                <span class="fi">I</span><span class="fu">U</span>${chev()}<div class="sp"></div>
                ${I.borders}${chev()}<div class="sp"></div>
                ${I.fill}${chev()}${I.fontA}${chev()}
              </div>
            </div>
          </div>
          <div class="g g3">
            <div class="two">
              <div class="r r-a1">
                ${I.alTop}${I.alMid}<div class="on-bg">${I.alBot}</div><div class="sp"></div>${I.orient}${chev()}
              </div>
              <div class="r r-a2">
                ${I.alL}${I.alC}${I.alR}<div class="sp"></div>${I.outdent}${I.indent}
              </div>
            </div>
          </div>
          <div class="g g4">
            <div class="two">
              <div class="inl"><div class="i">${I.wrap}</div><span>Wrap Text</span><span class="c">${chev()}</span></div>
              <div class="inl"><div class="i">${I.merge}</div><span>Merge &amp; Center</span><span class="c">${chev()}</span></div>
            </div>
          </div>
          <div class="g g5">
            <div class="two">
              <div class="r"><div class="dd"><span>General</span>${chev()}</div></div>
              <div class="r r-n2">
                <span class="dollar">$</span>${chev()}<span class="percent">%</span>${I.commaIc}<div class="sp"></div>${I.pfirst}${I.psecond}
              </div>
            </div>
          </div>
          <div class="g g6">
            <div class="big"><div class="bi">${I.cond}${chev()}</div><div class="bl">Conditional<br />Formatting</div></div>
            <div class="big"><div class="bi">${I.table}${chev()}</div><div class="bl">Format<br />as Table</div></div>
            <div class="big"><div class="bi">${I.cstyle}${chev()}</div><div class="bl">Cell<br />Styles</div></div>
          </div>
          <div class="g g7">
            <div class="stack">
              <div class="srow"><div class="s-ic">${I.ins}</div><span>Insert</span><span class="c">${chev()}</span></div>
              <div class="srow"><div class="s-ic">${I.del}</div><span>Delete</span><span class="c">${chev()}</span></div>
              <div class="srow"><div class="s-ic">${I.fmt}</div><span>Format</span><span class="c">${chev()}</span></div>
            </div>
          </div>
          <div class="g g8">
            <div class="stack">
              <div class="ed">${I.sum}${chev()}</div>
              <div class="ed">${I.fillDn}${chev()}</div>
              <div class="ed">${I.eraser}${chev()}</div>
            </div>
            <div class="big"><div class="bi">${I.sort}${chev()}</div><div class="bl">Sort &amp;<br />Filter</div></div>
            <div class="big"><div class="bi">${I.find}${chev()}</div><div class="bl">Find &amp;<br />Select</div></div>
          </div>
          <div class="g g9">
            <div class="big dim"><div class="bi">${I.sens}${chev("#c4c4c4")}</div><div class="bl">Sensitivity</div></div>
          </div>
          <div class="g g10">
            <div class="big dim"><div class="bi">${I.analyze}</div><div class="bl">Analyze<br />Data</div></div>
          </div>
        </div>
        <div class="fbar">
          <div class="namebox"><span>O30</span><div class="updown"><div class="tri-u"></div><div class="tri-d"></div></div></div>
          <div class="fsep"></div>
          <div class="fctl">
            <svg width="26" height="26" viewBox="0 0 26 26"><path d="M3 2l20 22M23 2L3 24" stroke="#d0d0d0" stroke-width="4"/></svg>
            <svg width="30" height="26" viewBox="0 0 30 26"><path d="M2 14l8 10L28 2" fill="none" stroke="#d0d0d0" stroke-width="4"/></svg>
            <span class="fx">fx</span>
          </div>
          <div class="fsep2"></div>
          <span></span>
          <div class="tri-d fexp"></div>
        </div>
        <div class="sheetw">
          <div class="sheet">${this.cells()}</div>
          <div class="canvas">${this.overlay()}</div>
        </div>
        <div class="sheettabs">
          <div class="st nav"><div class="tl"></div><div class="tr"></div></div>
          <div class="st">Completed 14.1</div>
          <div class="st">14.2 - 14.4</div>
          <div class="st">Problems 1</div>
          <div class="st act">2</div>
          <div class="st">3</div>
          <div class="st plus">+</div>
        </div>
        <div class="status">
          <div class="sleft"><span>Ready</span><span>Circular References</span>${I.a11y}<span>Accessibility: Unavailable</span></div>
          <div class="sright">
            <div class="vbtn">${I.vNormal}</div>${I.vPage}${I.vBreak}
            <div class="minus"></div>
            <div class="slider"><i></i></div>
            <div class="plus2"></div>
            <span class="zoom">100%</span>
          </div>
        </div>
      </div>
    `;
  }
}
